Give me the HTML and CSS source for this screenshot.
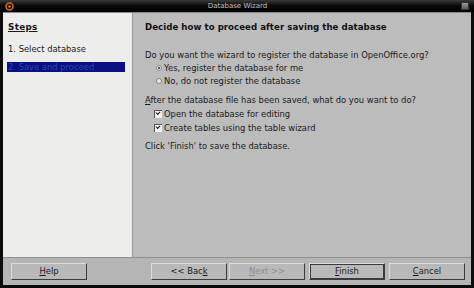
FILE: index.html
```html
<!DOCTYPE html>
<html>
<head>
<meta charset="utf-8">
<link rel="stylesheet" href="styles.css">
</head>
<body>
<div class="window">
  <div class="titlebar">
    <svg class="app-icon" width="9" height="9" viewBox="0 0 9 9"><circle cx="4.5" cy="4.5" r="3.5" fill="none" stroke="#d2691e" stroke-width="1.6"/><circle cx="4.5" cy="4.5" r="1.2" fill="#e08040"/></svg>
    <span class="title">Database Wizard</span>
    <span class="close"></span>
  </div>
  <div class="body">
    <div class="steps">
      <div class="steps-head">Steps</div>
      <div class="step">1. Select database</div>
      <div class="step current">2. Save and proceed</div>
    </div>
    <div class="content">
      <div class="heading">Decide how to proceed after saving the database</div>
      <div class="q">Do you want the wizard to register the database in OpenOffice.org?</div>
      <div class="opt"><span class="radio on"></span>Yes, register the database for me</div>
      <div class="opt"><span class="radio"></span>No, do not register the database</div>
      <div class="q q2"><u>A</u>fter the database file has been saved, what do you want to do?</div>
      <div class="opt chk"><span class="check"></span>Open the database for editing</div>
      <div class="opt chk"><span class="check"></span>Create tables using the table wizard</div>
      <div class="q q3">Click 'Finish' to save the database.</div>
    </div>
  </div>
  <div class="footer">
    <button class="btn help"><u>H</u>elp</button>
    <div class="spacer"></div>
    <button class="btn back">&lt;&lt; Bac<u>k</u></button>
    <button class="btn disabled"><u>N</u>ext &gt;&gt;</button>
    <button class="btn default"><u>F</u>inish</button>
    <button class="btn"><u>C</u>ancel</button>
  </div>
</div>
</body>
</html>
```
FILE: styles.css
```css
* { box-sizing: border-box; }
html, body { margin: 0; padding: 0; }
body { width: 474px; height: 288px; background: #0c0c0c; overflow: hidden;
  font-family: "DejaVu Sans", sans-serif; font-size: 8.4px; color: #1a1a1a; }
.window { width: 474px; height: 288px; display: flex; flex-direction: column; }
.titlebar { height: 12px; background: linear-gradient(#3a3a3a, #0a0a0a 45%, #000); display: flex; align-items: center; padding: 0 5px; }
.app-icon { flex: none; }
.title { flex: 1; text-align: center; color: #c0c0c0; font-size: 7px; }
.close { width: 8px; height: 8px; background: linear-gradient(#9a9a9a, #5a5a5a); border: 1px solid #333; }
.body { flex: 1; display: flex; border-top: 1px solid #8a8a8a; margin: 0 3px; }
.steps { width: 129px; background: #ededec; padding: 7px 5px 0 5px; }
.steps-head { font-weight: bold; text-decoration: underline; font-size: 8.8px; letter-spacing: 0.3px; height: 14px; line-height: 14px; }
.step { height: 13px; line-height: 13px; margin-top: 8.5px; }
.step.current { background: #0a0f82; color: #2a46a8; width: 118px; height: 10px; line-height: 10px; margin-top: 6.5px; margin-left: -1px; padding-left: 1px; }
.content { flex: 1; background: #bcbcbc; border-left: 1px solid #9a9a9a; padding: 7px 0 0 12px; }
.heading { font-weight: bold; font-size: 8.6px; letter-spacing: 0.05px; height: 14px; line-height: 14px; color: #111; }
.q { margin-top: 14.5px; height: 13px; line-height: 13px; }
.q2 { margin-top: 6px; }
.q3 { margin-top: 5px; }
.opt { height: 13px; line-height: 13px; padding-left: 11px; display: flex; align-items: center; }
.opt.chk { height: 14px; line-height: 14px; padding-left: 9px; }
.radio { width: 6px; height: 6px; border-radius: 50%; background: #e8e8e8; border: 1px solid #888; margin-right: 2px; position: relative; }
.radio.on::after { content: ""; position: absolute; left: 1px; top: 1px; width: 2px; height: 2px; background: #222; border-radius: 50%; }
.check { width: 8px; height: 8px; background: #f0f0f0; border-top: 1px solid #555; border-left: 1px solid #555; margin-right: 2px; position: relative; }
.check::after { content: ""; position: absolute; left: 1px; top: 0px; width: 3px; height: 2px; border-left: 1.5px solid #111; border-bottom: 1.5px solid #111; transform: rotate(-45deg); }
.footer { height: 28px; background: #b5b5b5; border-top: 1px solid #8e8e8e; display: flex; align-items: flex-start; padding: 5px 6px 0 8px; margin: 0 3px 3px 3px; gap: 4px; }
.spacer { flex: 1; }
.btn { width: 76px; height: 17px; font-family: inherit; font-size: 8.4px; color: #1a1a1a; background: #b9b9b9; border: 1px solid; border-color: #dcdcdc #3c3c3c #3c3c3c #dcdcdc; padding: 0; line-height: 15px; }
.btn.back { margin-right: -2px; }
.btn.disabled { color: #8e8e8e; }
.btn.default { outline: 1px solid #3a3a3a; outline-offset: -2px; }
```
